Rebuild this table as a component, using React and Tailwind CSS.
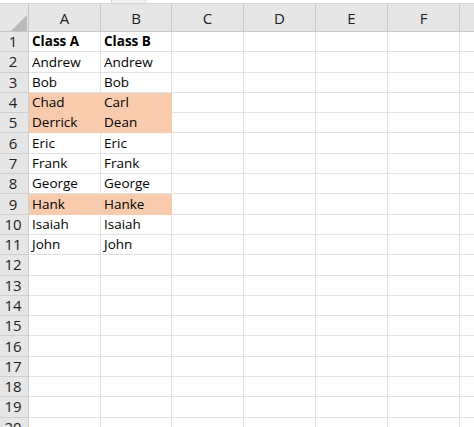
import React from "react";

const cols = ["A", "B", "C", "D", "E", "F", ""];
const data = [
  ["Class A", "Class B"],
  ["Andrew", "Andrew"],
  ["Bob", "Bob"],
  ["Chad", "Carl"],
  ["Derrick", "Dean"],
  ["Eric", "Eric"],
  ["Frank", "Frank"],
  ["George", "George"],
  ["Hank", "Hanke"],
  ["Isaiah", "Isaiah"],
  ["John", "John"],
];
const highlighted = new Set([4, 5, 9]);

export default function App() {
  const rows = Array.from({ length: 21 }, (_, i) => i + 1);
  return (
    <div
      className="w-[474px] h-[427px] overflow-hidden bg-white text-black"
      style={{ fontFamily: '"Open Sans", "Noto Sans", sans-serif' }}
    >
      <div className="flex h-[4px] bg-white border-b border-[#d6d6d6]">
        <div className="w-[112px] border-r border-[#d6d6d6]" />
        <div className="w-[34px] bg-[#f3f3f3] border-r border-[#d6d6d6]" />
        <div className="flex-1" />
      </div>
      <div className="grid grid-cols-[29px_72px_71px_72px_72px_72px_72px_72px] grid-rows-[28px] auto-rows-[20.3px]">
        <div className="relative bg-[#e6e6e6] border-r border-b border-[#c4c4c4]">
          <svg className="absolute left-[11px] top-[11px]" width="16" height="16" viewBox="0 0 16 16">
            <polygon points="16,0 16,16 0,16" fill="#b9b9b9" />
          </svg>
        </div>
        {cols.map((c, i) => (
          <div
            key={"h" + i}
            className="flex items-end justify-center pb-[2px] bg-[#e6e6e6] border-r border-b border-[#c8c8c8] text-[15px] leading-none text-[#222]"
          >
            <span className="pb-[3px]">{c}</span>
          </div>
        ))}
        {rows.map((r) => {
          const hl = highlighted.has(r);
          const rowData = data[r - 1] || [];
          return (
            <React.Fragment key={r}>
              <div className="flex items-center justify-center bg-[#e6e6e6] border-r border-b border-[#cfcfcf] text-[15px] leading-none text-[#222] pr-[2px]">
                {r}
              </div>
              {cols.map((c, ci) => {
                const val = ci < 2 ? rowData[ci] : undefined;
                const filled = hl && ci < 2;
                return (
                  <div
                    key={ci}
                    className={
                      "flex items-end pl-[3px] pb-[1px] text-[13.5px] leading-[18px] whitespace-nowrap overflow-hidden border-r border-b " +
                      (filled
                        ? "bg-[#f8cbad] border-[#f8cbad]"
                        : "bg-white border-[#e2e2e2]") +
                      (r === 1 ? " font-bold" : "")
                    }
                  >
                    {val}
                  </div>
                );
              })}
            </React.Fragment>
          );
        })}
      </div>
    </div>
  );
}
